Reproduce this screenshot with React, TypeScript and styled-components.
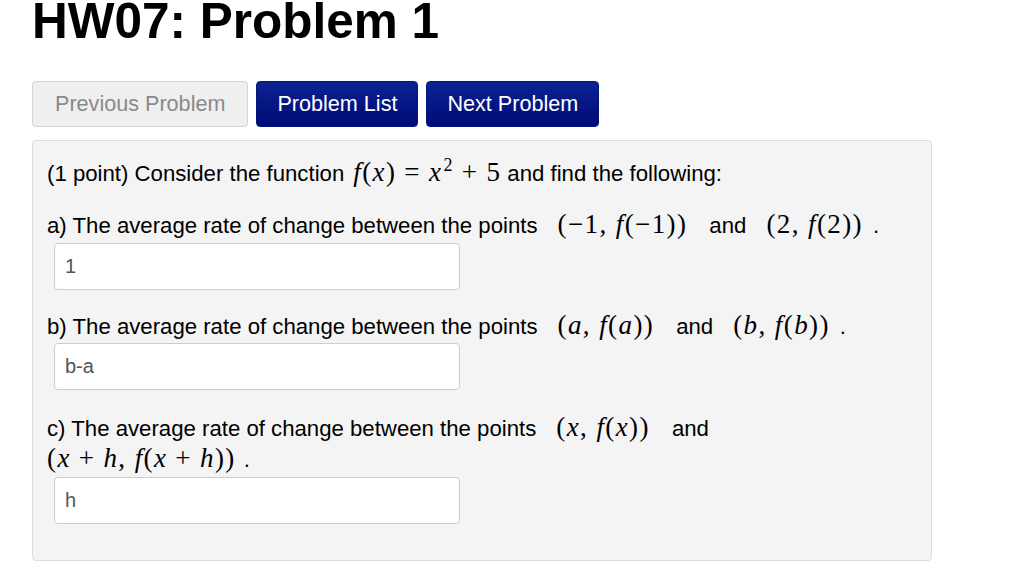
import React from "react";
import styled, { createGlobalStyle } from "styled-components";

const Global = createGlobalStyle`
  body {
    margin: 0;
    background: #ffffff;
    font-family: "Liberation Sans", Arial, sans-serif;
    color: #000;
  }
`;

const App = () => {
  return (
    <Page>
      <Global />
      <Title>HW07: Problem 1</Title>
      <Nav>
        <NavButton disabled>Previous Problem</NavButton>
        <NavButton>Problem List</NavButton>
        <NavButton>Next Problem</NavButton>
      </Nav>
      <ProblemBox>
        <Line>
          (1 point) Consider the function
          <M $l={9} $r={6}>
            <I>f</I>(<I>x</I>)<Op>=</Op><I>x</I>
            <Sup>2</Sup>
            <Op>+</Op>5
          </M>
          and find the following:
        </Line>
        <Part>
          <Line>
            a) The average rate of change between the points
            <M $l={20} $r={22}>
              (−1, <I>f</I>(−1))
            </M>
            and
            <M $l={20} $r={10}>
              (2, <I>f</I>(2))
            </M>
            .
          </Line>
          <Answer defaultValue="1" />
        </Part>
        <Part>
          <Line>
            b) The average rate of change between the points
            <M $l={20} $r={22}>
              (<I>a</I>, <I>f</I>(<I>a</I>))
            </M>
            and
            <M $l={20} $r={10}>
              (<I>b</I>, <I>f</I>(<I>b</I>))
            </M>
            .
          </Line>
          <Answer defaultValue="b-a" />
        </Part>
        <Part $top={23}>
          <Line>
            c) The average rate of change between the points
            <M $l={20} $r={22}>
              (<I>x</I>, <I>f</I>(<I>x</I>))
            </M>
            and
            <br />
            <M $r={8}>
              (<I>x</I>
              <Op>+</Op>
              <I>h</I>, <I>f</I>(<I>x</I>
              <Op>+</Op>
              <I>h</I>))
            </M>
            .
          </Line>
          <Answer defaultValue="h" />
        </Part>
      </ProblemBox>
    </Page>
  );
};

export default App;

const Page = styled.div`
  padding: 0 0 0 32px;
  width: 900px;
`;

const Title = styled.h1`
  margin: 0;
  font-size: 49.5px;
  line-height: 42px;
  font-weight: 700;
  color: #000;
`;

const Nav = styled.div`
  display: flex;
  gap: 8px;
  margin-top: 39px;
`;

const NavButton = styled.button`
  height: 46px;
  padding: 0 20px;
  border-radius: 4px;
  font-family: "Liberation Sans", Arial, sans-serif;
  font-size: 21.6px;
  border: 1px solid #03167a;
  color: #fff;
  background: linear-gradient(#0b2390, #000a78);

  &:disabled {
    padding: 0 22px;
    color: #8a8a8a;
    background: #efefef;
    border-color: #d4d4d4;
  }
`;

const ProblemBox = styled.div`
  margin-top: 13px;
  height: 421px;
  box-sizing: border-box;
  background: #f4f4f4;
  border: 1px solid #dedede;
  border-radius: 4px;
  padding: 17px 14px 0 14px;
`;

const Line = styled.div`
  font-size: 22.2px;
  line-height: 31px;
`;

const Part = styled.div<{ $top?: number }>`
  margin-top: ${(p) => p.$top ?? 21}px;
`;

const M = styled.span<{ $l?: number; $r?: number }>`
  font-family: "Liberation Serif", "Times New Roman", serif;
  font-size: 27px;
  line-height: 26px;
  letter-spacing: 1.4px;
  margin-left: ${(p) => p.$l ?? 0}px;
  margin-right: ${(p) => p.$r ?? 0}px;
  white-space: nowrap;
`;

const I = styled.i`
  font-style: italic;
`;

const Op = styled.span`
  margin: 0 8px;
`;

const Sup = styled.sup`
  font-size: 18px;
  line-height: 0;
  margin-left: 1px;
`;

const Answer = styled.input`
  display: block;
  margin: 1.5px 0 0 7px;
  width: 406px;
  height: 47px;
  box-sizing: border-box;
  border: 1px solid #cccccc;
  border-radius: 4px;
  background: #fff;
  padding: 0 10px;
  font-family: "Liberation Sans", Arial, sans-serif;
  font-size: 20px;
  color: #555;
  outline: none;
`;
